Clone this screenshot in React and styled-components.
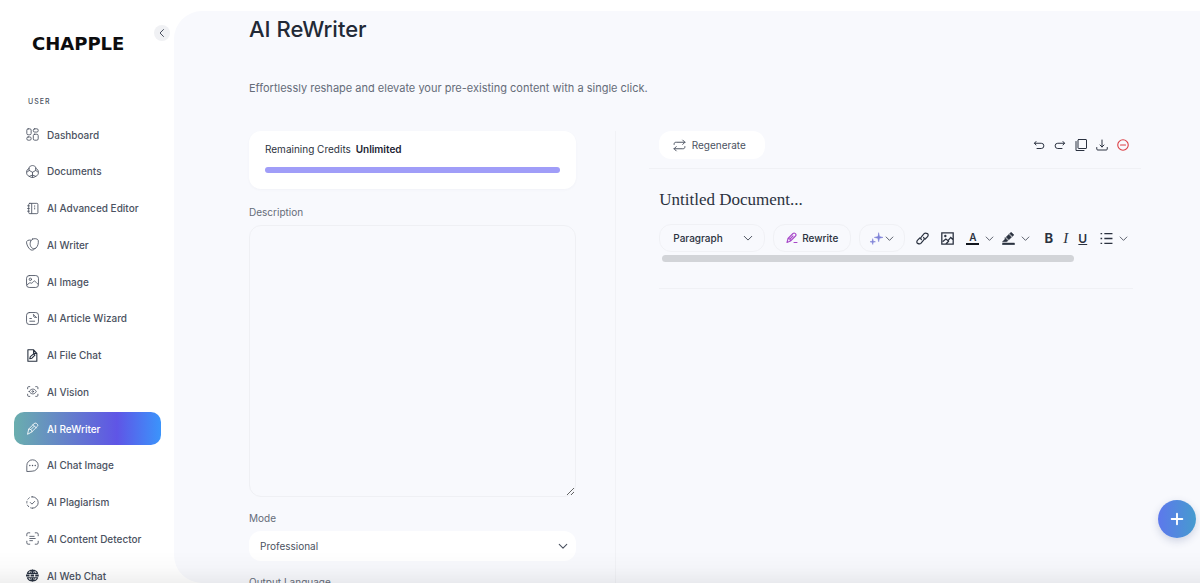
import React from "react";
import styled, { createGlobalStyle, css } from "styled-components";

const GlobalStyle = createGlobalStyle`
  * {
    box-sizing: border-box;
  }
  body {
    margin: 0;
    background: #ffffff;
    font-family: Inter, "Liberation Sans", sans-serif;
    color: #4b5261;
    overflow: hidden;
  }
  button, input, select, textarea {
    font-family: inherit;
    color: inherit;
  }
`;

const Icon = ({ size = 14, children, stroke = 1.5, ...rest }) => (
  <svg
    width={size}
    height={size}
    viewBox="0 0 24 24"
    fill="none"
    stroke="currentColor"
    strokeWidth={stroke}
    strokeLinecap="round"
    strokeLinejoin="round"
    aria-hidden="true"
    {...rest}
  >
    {children}
  </svg>
);

const Chevron = ({ size = 10, stroke = 2 }) => (
  <Icon size={size} stroke={stroke}>
    <path d="M3 8l9 9 9-9" />
  </Icon>
);

const menu = [
  {
    label: "Dashboard",
    icon: (
      <>
        <rect x="1.500" y="1.500" width="8" height="11" rx="2.5" />
        <rect x="13.500" y="1.500" width="9" height="6" rx="2.5" />
        <rect x="1.500" y="16.500" width="8" height="6" rx="2.5" />
        <rect x="13.500" y="11.500" width="9" height="11" rx="2.5" />
      </>
    ),
  },
  {
    label: "Documents",
    icon: (
      <>
        <path d="M6 4C8 2 10 1 12 1s4 1 6 3v6l-6 3.500L6 10z" />
        <path d="M6 6c-3 1-5 4-5 7M18 6c3 1 5 4 5 7M6 10l-5 4c0 3 2 6 5 7l6-2.500L18 21c3-1 5-4 5-7l-5-4M12 13.500V23M6 21c4 3 8 3 12 0" />
      </>
    ),
  },
  {
    label: "AI Advanced Editor",
    icon: (
      <>
        <rect x="5" y="2.500" width="17" height="19" rx="2" />
        <path d="M10.500 3v18M3 7h3M3 12h3M3 17h3M16 7v1M16 11v2" />
      </>
    ),
  },
  {
    label: "AI Writer",
    icon: (
      <>
        <path d="M12 2c4-1.500 9-1 10.500 2 1 5-.5 11-4 14.500-3 2-6 1.500-8.500-1-3-3-4-12 2-15.500z" />
        <path d="M9 4C4 3 .5 5 1 9c1 5 4 11 8 13 3 1 6 0 8-3" />
      </>
    ),
  },
  {
    label: "AI Image",
    icon: (
      <>
        <rect x="1" y="1" width="22" height="22" rx="5" />
        <circle cx="8" cy="8" r="2.200" />
        <path d="M2 18l4-3c2-2 3 1 5 0s3-5 5-4 3 4 6 6" />
      </>
    ),
  },
  {
    label: "AI Article Wizard",
    icon: (
      <>
        <rect x="1" y="1" width="22" height="22" rx="5" />
        <path d="M14 5v2c0 2 1 3 3 3h2M14 5l5 5M7 12h3M7 17h9" />
      </>
    ),
  },
  {
    label: "AI File Chat",
    dark: true,
    icon: (
      <>
        <path d="M14 1.500H3.500v21H20V8zM14 2v6h6" />
        <path d="M7 18l1-4 6-5 2.500 2.500L11 17z" />
      </>
    ),
  },
  {
    label: "AI Vision",
    icon: (
      <>
        <path d="M3 7V5a2 2 0 0 1 2-2h2M18 3h2a2 2 0 0 1 2 2v2M22 17v2a2 2 0 0 1-2 2h-2M7 21H5a2 2 0 0 1-2-2v-2" />
        <path d="M6 12c3-6 10-6 13 0-3 6-10 6-13 0z" />
        <circle cx="12.500" cy="12" r="1.500" />
      </>
    ),
  },
  {
    label: "AI ReWriter",
    active: true,
    icon: (
      <path d="M3 22l2-9L15 3c3-3 9 2 6 5L11 18zM13 5l6 6M5 13c4 0 6 2 6 5M9 14l6-6" />
    ),
  },
  {
    label: "AI Chat Image",
    icon: (
      <>
        <path d="M1.500 22.500V12A10.500 10.500 0 1 1 12 22.500z" />
        <path d="M7 12h.1M12 12h.1M17 12h.1" strokeWidth="2.500" />
      </>
    ),
  },
  {
    label: "AI Plagiarism",
    icon: (
      <>
        <path d="M12 1.500a10.500 10.500 0 0 1 0 21" />
        <path d="M12 22.500a10.500 10.500 0 0 1 0-21" strokeDasharray="3.500 4" />
        <path d="M8 12l3 3 5-5" />
      </>
    ),
  },
  {
    label: "AI Content Detector",
    icon: (
      <path d="M1.500 7V4a2.500 2.500 0 0 1 2.500-2.500h3M17 1.500h3A2.500 2.500 0 0 1 22.500 4v3M22.500 17v3a2.500 2.500 0 0 1-2.500 2.500h-3M7 22.500H4A2.500 2.500 0 0 1 1.500 20v-3M7 8h8M7 12h10M7 16h5" />
    ),
  },
  {
    label: "AI Web Chat",
    dark: true,
    icon: (
      <>
        <path d="M2.500 8a10.500 10.500 0 0 1 19 0zM2.500 16a10.500 10.500 0 0 0 19 0zM12 1.500V8M12 16v6.500M8.500 8c0-3 1.500-5 3.500-6 2 1 3.500 3 3.500 6M8.500 16c0 3 1.500 5 3.500 6 2-1 3.500-3 3.500-6" />
        <path d="M0 12h24" strokeWidth="3.500" strokeDasharray="6.500 2" strokeLinecap="butt" />
      </>
    ),
  },
];

const App = () => {
  return (
    <Layout>
      <GlobalStyle />
      <Sidebar>
        <SidebarTop>
          <Logo href="#">CHAPPLE</Logo>
          <Collapse type="button" aria-label="Collapse menu">
            <Icon size={12} stroke={2}>
              <path d="M15 5l-7 7 7 7" />
            </Icon>
          </Collapse>
        </SidebarTop>
        <MenuTitle>USER</MenuTitle>
        <Menu>
          {menu.map((item) => (
            <li key={item.label}>
              <MenuLink href="#" $active={item.active}>
                <MenuIcon $dark={item.dark}>
                  <Icon size={13} stroke={item.dark ? 2 : 1.6}>
                    {item.icon}
                  </Icon>
                </MenuIcon>
                {item.label}
              </MenuLink>
            </li>
          ))}
        </Menu>
      </Sidebar>

      <Panel>
        <Title>AI ReWriter</Title>
        <Subtitle>
          Effortlessly reshape and elevate your pre-existing content with a
          single click.
        </Subtitle>
        <Columns>
          <FormColumn>
            <Credits>
              <CreditsText>
                Remaining Credits <strong>Unlimited</strong>
              </CreditsText>
              <Bar />
            </Credits>
            <Field>
              <Label htmlFor="description">Description</Label>
              <Textarea id="description" />
            </Field>
            <Field>
              <Label htmlFor="mode">Mode</Label>
              <SelectWrap>
                <Select id="mode" defaultValue="Professional">
                  <option>Professional</option>
                </Select>
                <Chevron stroke={2.6} />
              </SelectWrap>
            </Field>
            <Field>
              <Label htmlFor="language">Output Language</Label>
              <SelectWrap>
                <Select id="language" />
                <Chevron stroke={2.6} />
              </SelectWrap>
            </Field>
          </FormColumn>

          <EditorColumn>
            <EditorHeader>
              <Regenerate type="button">
                <Icon size={13} stroke={1.8}>
                  <path d="M2 10c0-3 1-4 4-4h16M18 2l4 4-4 4M22 14c0 3-1 4-4 4H2M6 14l-4 4 4 4" />
                </Icon>
                Regenerate
              </Regenerate>
              <Actions>
                <IconButton type="button" aria-label="Undo">
                  <Icon size={12} stroke={2}>
                    <path d="M6 5L3 8.500 6 12M3 8.500h13.500a4.500 4.500 0 0 1 0 10.500H8" />
                  </Icon>
                </IconButton>
                <IconButton type="button" aria-label="Redo">
                  <Icon size={12} stroke={2}>
                    <path d="M18 5l3 3.500-3 3.500M21 8.500H7.500a4.500 4.500 0 0 0 0 10.500H16" />
                  </Icon>
                </IconButton>
                <IconButton type="button" aria-label="Copy">
                  <Icon size={12} stroke={2}>
                    <rect x="6" y="1" width="17" height="18" rx="1" />
                    <path d="M2 5v18h16" />
                  </Icon>
                </IconButton>
                <IconButton type="button" aria-label="Download">
                  <Icon size={12} stroke={2}>
                    <path d="M12 2v14M8 12l4 4 4-4M1.500 17v3a2 2 0 0 0 2 2h17a2 2 0 0 0 2-2v-3" />
                  </Icon>
                </IconButton>
                <IconButton type="button" aria-label="Delete" $color="#dc3f45">
                  <Icon size={12} stroke={2.2}>
                    <circle cx="12" cy="12" r="10.500" />
                    <path d="M7 12h10" />
                  </Icon>
                </IconButton>
              </Actions>
            </EditorHeader>

            <Editor>
              <DocumentTitle
                aria-label="Document title"
                defaultValue="Untitled Document..."
              />
              <Toolbar>
                <ParagraphWrap>
                  <ParagraphSelect aria-label="Block" defaultValue="Paragraph">
                    <option>Paragraph</option>
                  </ParagraphSelect>
                  <Chevron />
                </ParagraphWrap>
                <Pill type="button" $width="78px">
                  <Icon size={12} stroke={2.2} color="#a849c9">
                    <path d="M2 21l2-8L14 3c3-3 8 2 5 5L9 18zM4 13c3 0 5 2 5 5M8 14l6-6M16 21h6" />
                  </Icon>
                  Rewrite
                </Pill>
                <Pill type="button" aria-label="AI tools" $width="46px" $gap="2px">
                  <Icon size={13} color="#7f83d8" fill="currentColor" stroke={1}>
                    <path d="M16 2l1.500 6.500L24 10l-6.500 1.500L16 18l-1.500-6.500L8 10l6.500-1.500z" />
                    <path d="M5 13l1 4 4 1-4 1-1 4-1-4-4-1 4-1z" />
                  </Icon>
                  <Chevron size={9} />
                </Pill>
                <Tools>
                  <IconButton type="button" aria-label="Link">
                    <Icon size={13} stroke={2.2}>
                      <path d="M10 14c-2-2-1-4 0-5l5-6c2-2 4-1 6 0s2 4 0 6l-4 4M14 10c2 2 1 4 0 5l-5 6c-2 2-4 1-6 0s-2-4 0-6l4-4" />
                    </Icon>
                  </IconButton>
                  <IconButton type="button" aria-label="Image">
                    <Icon size={13} stroke={2.4} strokeLinejoin="miter">
                      <path d="M1.500 1.500h21v21h-21zM4 17l5-4 4 3 5-6 4 4M9 22l5-5" />
                      <circle cx="8" cy="7.500" r="1" />
                    </Icon>
                  </IconButton>
                  <ColorButton type="button" aria-label="Text colour">
                    <span>A</span>
                    <Chevron size={9} />
                  </ColorButton>
                  <ColorButton type="button" aria-label="Highlight colour">
                    <Icon size={13} fill="currentColor" stroke={1}>
                      <path d="M6 11l5 5-3 2H1l4-4zM7.500 9.500l5-5 5 5-5 5zM14 3l3-2.500 5 5L19 8z" />
                      <path d="M1 20.500h22v3H1z" />
                    </Icon>
                    <Chevron size={9} />
                  </ColorButton>
                </Tools>
                <Formats>
                  <IconButton type="button" aria-label="Bold">
                    <b>B</b>
                  </IconButton>
                  <IconButton type="button" aria-label="Italic">
                    <i>I</i>
                  </IconButton>
                  <IconButton type="button" aria-label="Underline">
                    <u>U</u>
                  </IconButton>
                </Formats>
                <ColorButton type="button" aria-label="List">
                  <Icon size={13} stroke={2.6} strokeLinecap="butt">
                    <path d="M8 3h15M8 12h15M8 21h15M1 3h3M1 12h3M1 21h3" />
                  </Icon>
                  <Chevron size={9} />
                </ColorButton>
              </Toolbar>
              <Scrollbar />
            </Editor>
          </EditorColumn>
        </Columns>
      </Panel>
      <Fade />
      <AddButton type="button" aria-label="Add">
        <Icon size={16} stroke={2.8}>
          <path d="M12 4v16M4 12h16" />
        </Icon>
      </AddButton>
    </Layout>
  );
};

const Layout = styled.div`
  display: flex;
  height: 100vh;
  overflow: hidden;
`;

const Sidebar = styled.aside`
  display: flex;
  flex-direction: column;
  flex: none;
  width: 174px;
  height: calc(100vh + 9px);
`;

const SidebarTop = styled.div`
  display: flex;
  justify-content: space-between;
  align-items: flex-start;
  padding: 25px 4px 0 32px;
  height: 92px;
`;

const Logo = styled.a`
  margin-top: 8px;
  font-family: "DejaVu Sans", sans-serif;
  font-size: 18px;
  font-weight: 700;
  line-height: 22px;
  color: #0c0c0e;
  text-decoration: none;
`;

const Collapse = styled.button`
  display: flex;
  align-items: center;
  justify-content: center;
  flex: none;
  width: 16px;
  height: 16px;
  padding: 0;
  border: 0;
  border-radius: 50%;
  background: #f0f1f4;
`;

const MenuTitle = styled.h2`
  margin: 4px 0 10px 28px;
  font-size: 7px;
  font-weight: 500;
  line-height: 12px;
  letter-spacing: 1px;
`;

const Menu = styled.ul`
  display: flex;
  flex: 1;
  flex-direction: column;
  justify-content: space-between;
  margin: 0;
  padding: 0 13px 0 14px;
  list-style: none;
`;

const MenuLink = styled.a`
  display: flex;
  align-items: center;
  gap: 8px;
  height: 33px;
  padding-left: 12px;
  border-radius: 10px;
  font-size: 10px;
  font-weight: 500;
  color: #4b5261;
  text-decoration: none;
  white-space: nowrap;
  ${(props) =>
    props.$active &&
    css`
      color: #ffffff;
      background: linear-gradient(90deg, #6aaeae, #5f55e6 70%, #3b94fb);
    `}
`;

const MenuIcon = styled.span`
  display: flex;
  ${(props) => (props.$dark ? "color: #27303f;" : "")}
`;

const Panel = styled.main`
  flex: 1;
  min-width: 0;
  margin-top: 11px;
  padding: 0 59px 0 75px;
  border-radius: 28px 0 0 28px;
  background: #f8f9fd;
  overflow: hidden;
`;

const Title = styled.h1`
  margin: 0;
  font-size: 22px;
  font-weight: 500;
  line-height: 36px;
  color: #222936;
`;

const Subtitle = styled.p`
  margin: 32px 0 34px;
  font-size: 11px;
  line-height: 18px;
  color: #656c79;
`;

const Columns = styled.div`
  display: grid;
  grid-template-columns: 7fr 10fr;
`;

const FormColumn = styled.form`
  padding-right: 39px;
  border-right: 1px solid #f1f2f6;
`;

const Credits = styled.div`
  margin-bottom: 14px;
  padding: 10px 16px 16px;
  border-radius: 12px;
  background: #ffffff;
  box-shadow: 0 1px 3px rgba(30, 40, 80, 0.03);
`;

const CreditsText = styled.div`
  margin-bottom: 10px;
  font-size: 10px;
  line-height: 16px;
  color: #2b3240;
  strong {
    margin-left: 2px;
    font-weight: 600;
    color: #1b2232;
  }
`;

const Bar = styled.div`
  height: 6px;
  border-radius: 3px;
  background: #a09df8;
`;

const Field = styled.div`
  display: flex;
  flex-direction: column;
  gap: 4px;
  margin-bottom: 12px;
`;

const Label = styled.label`
  font-size: 10px;
  line-height: 18px;
  color: #656c79;
`;

const Textarea = styled.textarea`
  width: 100%;
  height: 272px;
  padding: 10px;
  border: 1px solid #eff0f4;
  border-radius: 12px;
  background: transparent;
`;

const SelectWrap = styled.div`
  position: relative;
  svg {
    position: absolute;
    top: 10px;
    right: 8px;
    pointer-events: none;
  }
`;

const Select = styled.select`
  appearance: none;
  display: block;
  width: 100%;
  height: 30px;
  padding: 0 11px;
  border: 0;
  border-radius: 12px;
  background: #ffffff;
  font-size: 10px;
`;

const EditorColumn = styled.section`
  padding-left: 33px;
`;

const EditorHeader = styled.div`
  display: flex;
  align-items: center;
  justify-content: space-between;
  padding: 0 12px 9px 10px;
  border-bottom: 1px solid #f0f1f5;
`;

const Regenerate = styled.button`
  display: flex;
  align-items: center;
  justify-content: center;
  gap: 6px;
  width: 106px;
  height: 28px;
  padding: 0 6px 0 0;
  border: 0;
  border-radius: 12px;
  background: #ffffff;
  font-size: 10px;
`;

const Actions = styled.div`
  display: flex;
  gap: 9px;
`;

const IconButton = styled.button`
  display: flex;
  align-items: center;
  justify-content: center;
  padding: 0;
  border: 0;
  background: none;
  color: ${(props) => props.$color || "#2b3240"};
`;

const Editor = styled.div`
  margin: 0 8px 0 10px;
  padding: 19px 0 26px;
  border-bottom: 1px solid #f0f1f5;
`;

const DocumentTitle = styled.input`
  display: block;
  width: 100%;
  height: 24px;
  margin-bottom: 12px;
  padding: 0;
  border: 0;
  background: none;
  font-family: "Liberation Serif", serif;
  font-size: 17px;
  color: #2b3240;
`;

const Toolbar = styled.div`
  display: flex;
  align-items: center;
  gap: 8px;
  height: 28px;
  color: #2b3240;
`;

const pill = css`
  height: 28px;
  border: 1px solid #f0f1f5;
  border-radius: 12px;
  background: none;
  font-size: 10px;
  font-weight: 500;
`;

const ParagraphWrap = styled(SelectWrap)`
  flex: none;
  width: 106px;
  svg {
    top: 9px;
    right: 12px;
  }
`;

const ParagraphSelect = styled.select`
  ${pill}
  appearance: none;
  display: block;
  width: 100%;
  padding: 0 13px;
`;

const Pill = styled.button`
  ${pill}
  display: flex;
  flex: none;
  align-items: center;
  justify-content: center;
  gap: ${(props) => props.$gap || "4px"};
  width: ${(props) => props.$width};
  padding: 0;
`;

const Tools = styled.div`
  display: flex;
  align-items: center;
  gap: 12px;
  margin: 0 6px 0 3px;
  button:last-child {
    margin-left: -4px;
  }
`;

const Formats = styled.div`
  display: flex;
  align-items: center;
  gap: 8px;
  margin-right: 5px;
  ${IconButton} {
    width: 9px;
    font-size: 13px;
  }
  i {
    font-family: "Liberation Serif", serif;
    font-size: 15px;
  }
  u {
    font-size: 12px;
    font-weight: 600;
  }
`;

const ColorButton = styled(IconButton)`
  gap: 6px;
  span {
    width: 13px;
    border-bottom: 2px solid #11151d;
    font-size: 10px;
    font-weight: 600;
    line-height: 11px;
  }
`;

const Scrollbar = styled.div`
  width: 87%;
  height: 7px;
  margin: 3px 0 0 3px;
  border-radius: 4px;
  background: #d2d4d8;
`;

const Fade = styled.div`
  position: fixed;
  right: 0;
  bottom: 0;
  left: 0;
  height: 32px;
  background: linear-gradient(rgba(0, 0, 0, 0), rgba(0, 0, 0, 0.015) 50%, rgba(0, 0, 0, 0.06));
  pointer-events: none;
`;

const AddButton = styled.button`
  position: fixed;
  right: 4px;
  bottom: 45px;
  display: flex;
  align-items: center;
  justify-content: center;
  width: 38px;
  height: 38px;
  padding: 0;
  border: 0;
  border-radius: 50%;
  background: linear-gradient(90deg, #5d78ec, #469bcf);
  box-shadow: 0 3px 8px rgba(40, 60, 120, 0.2);
  color: #ffffff;
`;

export default App;
